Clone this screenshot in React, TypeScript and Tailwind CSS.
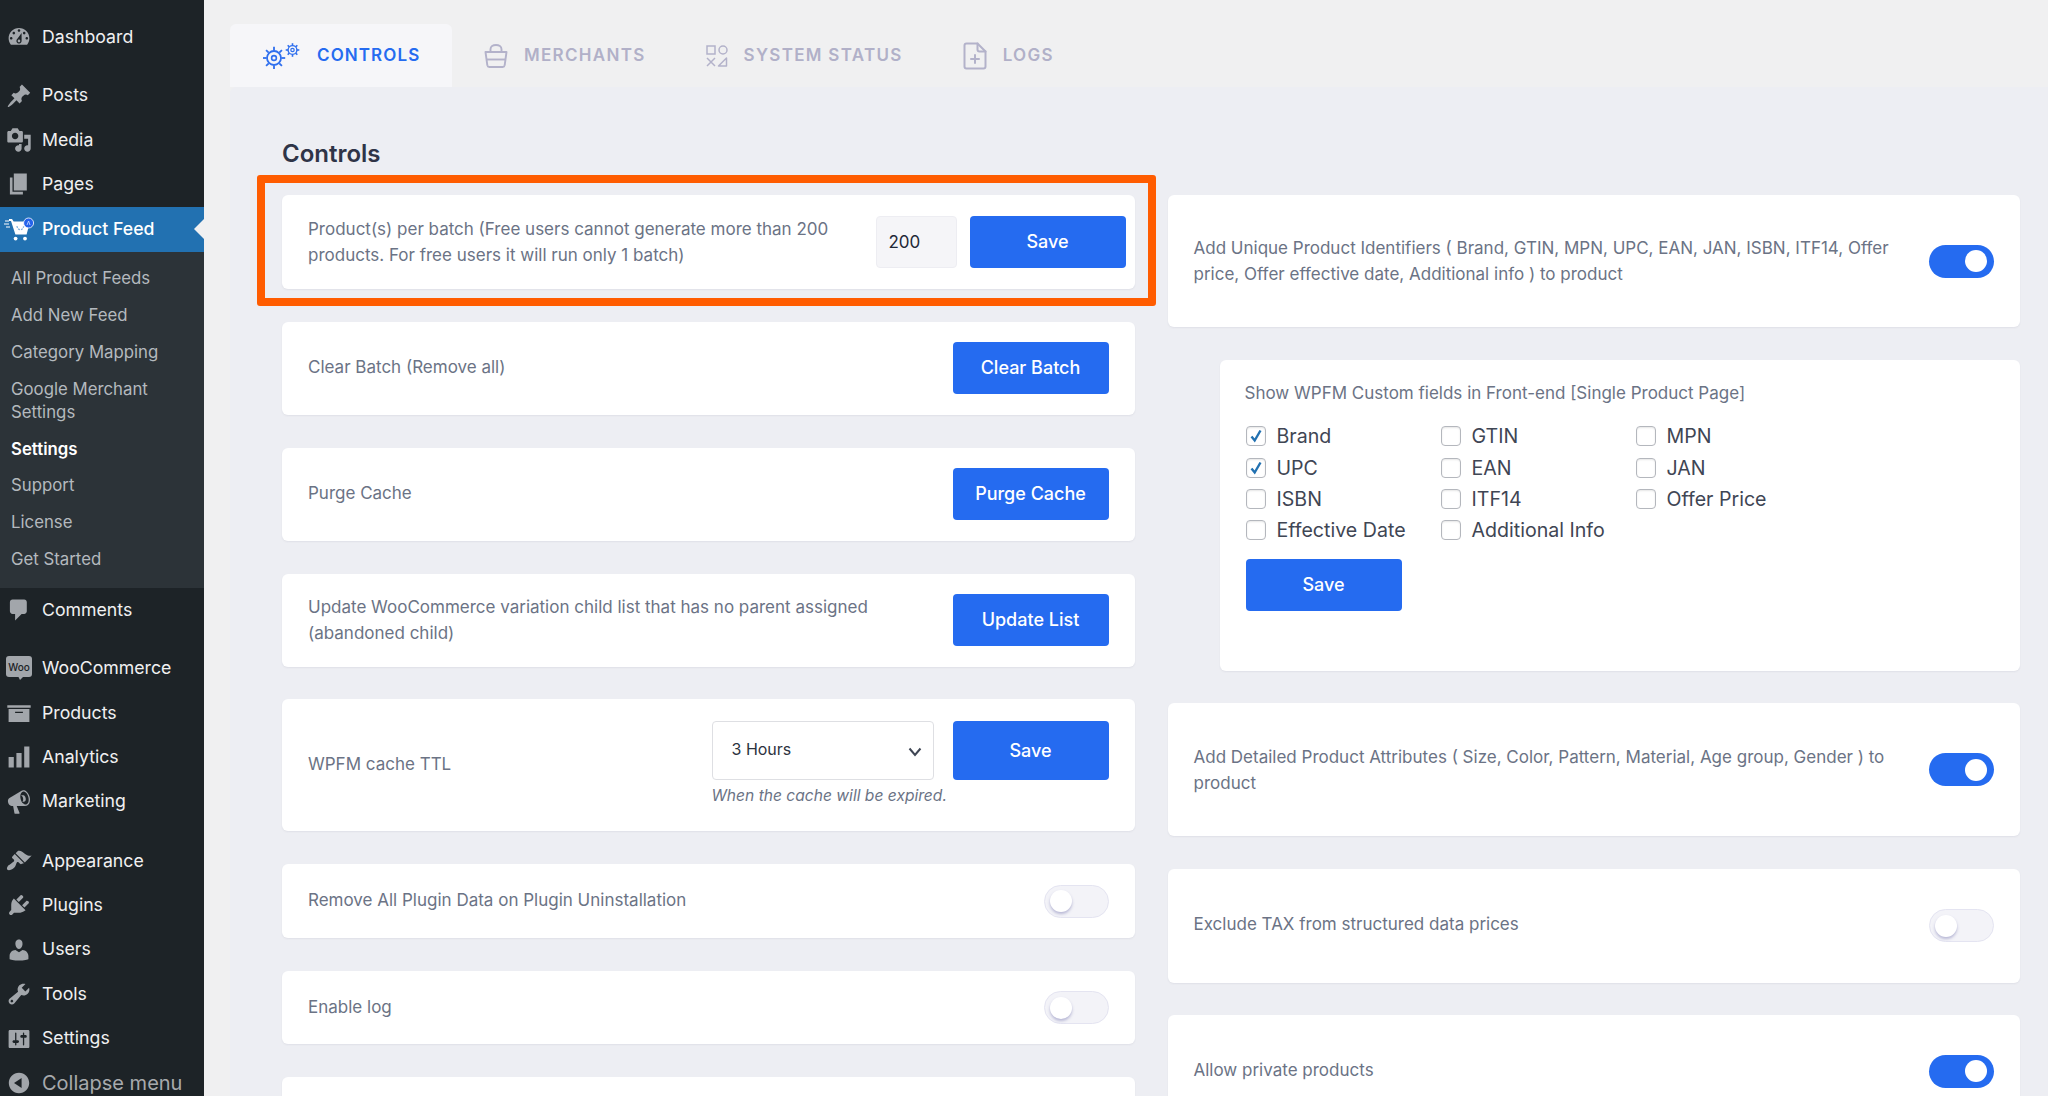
import React from "react";

const font = { fontFamily: '"Inter", "Liberation Sans", sans-serif' };

const P: Record<string, string> = {
  dashboard: "M3.76 16h12.48c1.1-1.37 1.76-3.11 1.76-5 0-4.42-3.58-8-8-8s-8 3.58-8 8c0 1.89.66 3.63 1.76 5zM10 4c.55 0 1 .45 1 1s-.45 1-1 1-1-.45-1-1 .45-1 1-1zM6 6c.55 0 1 .45 1 1s-.45 1-1 1-1-.45-1-1 .45-1 1-1zm8 0c.55 0 1 .45 1 1s-.45 1-1 1-1-.45-1-1 .45-1 1-1zm-5.37 5.55L12 7v6c0 1.1-.9 2-2 2s-2-.9-2-2c0-.57.24-1.08.63-1.45zM4 10c.55 0 1 .45 1 1s-.45 1-1 1-1-.45-1-1 .45-1 1-1zm12 0c.55 0 1 .45 1 1s-.45 1-1 1-1-.45-1-1 .45-1 1-1zm-5 3c0-.55-.45-1-1-1s-1 .45-1 1 .45 1 1 1 1-.45 1-1z",
  post: "M10.44 3.02l1.82-1.82 6.36 6.35-1.83 1.82c-1.05-.68-2.48-.57-3.41.36l-.75.75c-.92.93-1.04 2.35-.35 3.41l-1.83 1.82-2.41-2.41-2.8 2.79c-.42.42-3.38 2.71-3.8 2.29s1.86-3.39 2.28-3.81l2.79-2.79L4.1 9.36l1.83-1.82c1.05.69 2.48.57 3.4-.36l.75-.75c.93-.92 1.05-2.35.36-3.41z",
  media: "M13 11V4c0-.55-.45-1-1-1h-1.67L9 1H5L3.67 3H2c-.55 0-1 .45-1 1v7c0 .55.45 1 1 1h10c.55 0 1-.45 1-1zM7 4.5c1.38 0 2.5 1.12 2.5 2.5S8.38 9.5 7 9.5 4.5 8.38 4.5 7 5.62 4.5 7 4.5zM14 6h5v10.5c0 1.38-1.12 2.5-2.5 2.5S14 17.88 14 16.5s1.12-2.5 2.5-2.5c.17 0 .34.02.5.05V9h-3V6zm-4 8.05V13h2v3.5c0 1.38-1.12 2.5-2.5 2.5S7 17.88 7 16.5 8.12 14 9.5 14c.17 0 .34.02.5.05z",
  page: "M6 15V2h10v13H6zm-1 1h8v2H3V5h2v11z",
  comments: "M5 2h9c1.1 0 2 .9 2 2v7c0 1.1-.9 2-2 2h-2l-5 5v-5H5c-1.1 0-2-.9-2-2V4c0-1.1.9-2 2-2z",
  archive: "M19 4v2H1V4h18zM2 7h16v10H2V7zm11 3V9H7v1h6z",
  chart: "M18 18V2h-4v16h4zm-6 0V7H8v11h4zm-6 0v-8H2v8h4z",
  megaphone: "M18.15 5.94c.46 1.62.38 3.22-.02 4.48-.42 1.28-1.26 2.18-2.3 2.48-.16.06-.26.06-.4.06-.06.02-.12.02-.18.02-.06.02-.14.02-.22.02h-6.8l2.22 5.5c.02.14-.06.26-.14.34-.08.1-.24.16-.34.16H6.95c-.1 0-.26-.06-.34-.16-.08-.08-.16-.2-.14-.34l-1-5.5H4.25l-.02-.02c-.5.06-1.08-.18-1.54-.62s-.88-1.08-1.06-1.88c-.24-.8-.2-1.56-.02-2.2.18-.62.58-1.08 1.06-1.3l.02-.02 9-5.4c.1-.06.18-.1.24-.16.06-.04.14-.08.24-.12.16-.08.28-.12.5-.18 1.04-.3 2.24.1 3.22.98s1.84 2.24 2.26 3.86zm-2.58 5.98h-.02c.4-.1.74-.34 1.04-.7.58-.7.86-1.76.86-3.04 0-.64-.1-1.3-.28-1.98-.34-1.36-1.02-2.5-1.78-3.24s-1.68-1.1-2.46-.88c-.82.22-1.4.96-1.7 2-.32 1.04-.28 2.36.06 3.72.38 1.36 1 2.5 1.8 3.24.78.74 1.62 1.1 2.48.88zm-2.54-7.08c.22-.04.42-.02.62.04.2.08.38.18.56.34.18.18.34.4.46.64.14.26.26.54.36.86s.16.62.18.92c.02.32 0 .6-.06.86-.04.26-.16.48-.28.68-.14.2-.3.32-.52.38l-1.78.46c.6-.7.86-1.94.48-3.24-.38-1.3-1.26-2.08-2.02-1.94z",
  appearance: "M14.48 11.06L7.41 3.99l1.5-1.5c.5-.56 2.3-.47 3.51.32 1.21.8 1.43 1.28 2.91 2.1 1.18.64 2.45 1.26 4.45.85zm-.71.71L6.7 4.7 4.93 6.47c-.39.39-.39 1.02 0 1.41l1.06 1.06c.39.39.39 1.03 0 1.42-.6.6-1.43 1.11-2.21 1.69-.35.26-.7.53-1.01.84C1.43 13.23.1 15.8 1.12 16.8c.99 1 3.74-.3 5.08-1.64.44-.44.78-.9 1.03-1.4.64-1.27.77-2.35 1.11-2.7.39-.38 1.02-.39 1.41 0l1.07 1.07c.39.39 1.02.39 1.41 0z",
  plugin: "M13.11 4.36L9.87 7.6 8 5.73l3.24-3.24c.35-.34 1.05-.2 1.56.32.52.51.66 1.21.31 1.55zm-8 1.77l.91-1.12 9.01 9.01-1.19.84c-.71.71-2.63 1.16-3.82 1.16H6.14L4.9 17.26c-.59.59-1.54.59-2.12 0-.59-.58-.59-1.53 0-2.12l1.24-1.24v-3.88c0-1.13.4-3.19 1.09-3.89zm7.26 3.97l3.24-3.24c.34-.35 1.04-.21 1.55.31.52.51.66 1.21.31 1.55l-3.24 3.25z",
  users: "M10 9.25c-2.27 0-2.73-3.44-2.73-3.44C7 4.02 7.82 2 9.97 2c2.16 0 2.98 2.02 2.71 3.81 0 0-.41 3.44-2.68 3.44zm0 2.57L12.72 10c2.39 0 4.52 2.33 4.52 4.53v2.49s-3.65 1.13-7.24 1.13c-3.65 0-7.24-1.13-7.24-1.13v-2.49c0-2.25 1.94-4.48 4.47-4.48z",
  tools: "M16.68 9.77c-1.34 1.34-3.3 1.67-4.95.99l-5.41 6.52c-.99.99-2.59.99-3.58 0s-.99-2.59 0-3.57l6.52-5.42c-.68-1.65-.35-3.61.99-4.95 1.28-1.28 3.12-1.62 4.72-1.06l-2.89 2.89 2.82 2.82 2.86-2.87c.53 1.58.18 3.39-1.08 4.65zM3.81 16.21c.4.39 1.04.39 1.43 0 .4-.4.4-1.04 0-1.43-.39-.4-1.03-.4-1.43 0-.39.39-.39 1.03 0 1.43z",
  settings: "M18 16V4c0-.55-.45-1-1-1H3c-.55 0-1 .45-1 1v12c0 .55.45 1 1 1h14c.55 0 1-.45 1-1zM8 11h1c.55 0 1 .45 1 1s-.45 1-1 1H8v1.5c0 .28-.22.5-.5.5s-.5-.22-.5-.5V13H6c-.55 0-1-.45-1-1s.45-1 1-1h1V5.5c0-.28.22-.5.5-.5s.5.22.5.5V11zm5-2h-1c-.55 0-1-.45-1-1s.45-1 1-1h1V5.5c0-.28.22-.5.5-.5s.5.22.5.5V7h1c.55 0 1 .45 1 1s-.45 1-1 1h-1v5.5c0 .28-.22.5-.5.5s-.5-.22-.5-.5V9z",
  collapse: "M10 2.16c4.33 0 7.84 3.51 7.84 7.84s-3.51 7.84-7.84 7.84S2.16 14.33 2.16 10 5.71 2.16 10 2.16zm2 11.72V6.12L6.18 9.97z",
};

function WpIcon({ name }: { name: string }) {
  return (
    <svg viewBox="0 0 20 20" className="w-[26px] h-[26px] fill-[#a2a6ab]">
      <path d={P[name]} />
    </svg>
  );
}

function WooIcon() {
  return (
    <svg viewBox="0 0 26 26" className="w-[26px] h-[26px]">
      <rect x="0" y="1" width="26" height="21" rx="3" fill="#a2a6ab" />
      <path d="M12 21h6l-4 4z" fill="#a2a6ab" />
      <text x="13" y="15.5" textAnchor="middle" fontSize="10" fontWeight="500" fill="#1d2327" fontFamily="Inter, sans-serif">Woo</text>
    </svg>
  );
}

function CartIcon() {
  return (
    <svg viewBox="0 0 30 26" className="w-[30px] h-[26px]">
      <path d="M1 5h4M0 8h5M2 11h4" stroke="#fff" strokeWidth="1" />
      <path d="M5 3h3l1.6 2.5H26l-3.4 13H11.4L7 5H5z" fill="#fff" />
      <circle cx="11.6" cy="22.6" r="1.9" fill="#fff" />
      <circle cx="21" cy="22.6" r="1.9" fill="#fff" />
      <path d="M13 10c.3 4.8 6 4.8 6.6.4" fill="none" stroke="#7fb0dc" strokeWidth="1.2" strokeDasharray="2 1" />
      <circle cx="24.6" cy="7" r="5" fill="#2563eb" stroke="#fff" strokeWidth=".8" />
      <path d="M23 9l1.6-4 1.4 4" fill="none" stroke="#cfe0ff" strokeWidth=".8" />
    </svg>
  );
}

function GearIcon() {
  const big = Array.from({ length: 8 }, (_, i) => i * 45);
  return (
    <svg viewBox="0 0 38 26" className="w-[38px] h-[26px]" fill="none" stroke="#2f6fee">
      <g transform="translate(11 15)">
        {big.map((a) => (
          <path key={a} d="M0 -7.5V-11.2" strokeWidth="1.8" transform={`rotate(${a})`} />
        ))}
        <circle r="7" strokeWidth="1.8" />
        <circle r="2.4" strokeWidth="1.6" />
      </g>
      <g transform="translate(29.5 7)">
        {big.map((a) => (
          <path key={a} d="M0 -4.5V-6.8" strokeWidth="1.6" transform={`rotate(${a})`} />
        ))}
        <circle r="4.4" strokeWidth="1.4" />
        <circle r="1.7" strokeWidth="1.2" />
      </g>
    </svg>
  );
}

function BasketIcon() {
  return (
    <svg viewBox="0 0 24 26" className="w-[24px] h-[26px]" fill="none" stroke="#b3b2ca" strokeWidth="1.9" strokeLinejoin="round">
      <path d="M6.5 9V6.2C6.5 3.6 9 2 12 2s5.5 1.6 5.5 4.2V9" />
      <path d="M1.5 9h21l-1.8 13.2c-.2 1.2-1 1.8-2 1.8H5.3c-1 0-1.8-.6-2-1.8L1.5 9z" />
      <path d="M3 16.5h18" />
    </svg>
  );
}

function ShapesIcon() {
  return (
    <svg viewBox="0 0 22 22" className="w-[22px] h-[22px]" fill="none" stroke="#b3b2ca" strokeWidth="1.5">
      <rect x="1" y="1" width="8" height="8" />
      <circle cx="17" cy="5" r="4" />
      <path d="M1 13l8 8M9 13l-8 8" />
      <path d="M20.5 13v8h-8z" strokeLinejoin="round" />
    </svg>
  );
}

function DocIcon() {
  return (
    <svg viewBox="0 0 24 28" className="w-[24px] h-[28px]" fill="none" stroke="#b3b2ca" strokeWidth="2" strokeLinejoin="round" strokeLinecap="round">
      <path d="M3.5 1.5h11l8 8v15c0 1.2-.8 2-2 2h-17c-1.2 0-2-.8-2-2v-21c0-1.2.8-2 2-2z" />
      <path d="M14.5 1.5v6c0 1.2.8 2 2 2h6" />
      <path d="M12 13v8M8 17h8" />
    </svg>
  );
}

function MenuItem({ label, icon, custom }: { label: string; icon?: string; custom?: React.ReactNode }) {
  return (
    <div className="flex items-center h-[44.4px] text-[#f0f0f1] text-[17.7px]">
      <span className="w-[42px] pl-[6px] shrink-0 flex items-center">{custom ?? <WpIcon name={icon!} />}</span>
      <span>{label}</span>
    </div>
  );
}

function Sidebar() {
  const subs = ["All Product Feeds", "Add New Feed", "Category Mapping"];
  const subs2 = ["Support", "License", "Get Started"];
  const subClass = "px-[11px] py-[6.9px] leading-[23px] text-[16.8px] text-[#b4b9be]";
  return (
    <aside className="w-[204px] shrink-0 bg-[#1d2327] pt-[15px] overflow-hidden">
      <MenuItem label="Dashboard" icon="dashboard" />
      <div className="mt-[14px]">
        <MenuItem label="Posts" icon="post" />
        <MenuItem label="Media" icon="media" />
        <MenuItem label="Pages" icon="page" />
      </div>
      <div className="relative flex items-center h-[45px] bg-[#2271b1] text-white text-[17.7px] font-medium">
        <span className="w-[42px] pl-[4px] shrink-0 flex items-center"><CartIcon /></span>
        <span>Product Feed</span>
        <span className="absolute right-0 top-[12px] w-0 h-0 border-y-[10px] border-r-[10px] border-y-transparent border-r-[#f0f0f1]" />
      </div>
      <div className="bg-[#2c3338] pt-[9px] pb-[10px]">
        {subs.map((s) => (
          <div key={s} className={subClass}>{s}</div>
        ))}
        <div className={subClass}>Google Merchant<br />Settings</div>
        <div className={`${subClass} !text-white font-semibold`}>Settings</div>
        {subs2.map((s) => (
          <div key={s} className={subClass}>{s}</div>
        ))}
      </div>
      <MenuItem label="Comments" icon="comments" />
      <div className="mt-[14px]">
        <MenuItem label="WooCommerce" custom={<WooIcon />} />
        <MenuItem label="Products" icon="archive" />
        <MenuItem label="Analytics" icon="chart" />
        <MenuItem label="Marketing" icon="megaphone" />
      </div>
      <div className="mt-[15px]">
        <MenuItem label="Appearance" icon="appearance" />
        <MenuItem label="Plugins" icon="plugin" />
        <MenuItem label="Users" icon="users" />
        <MenuItem label="Tools" icon="tools" />
        <MenuItem label="Settings" icon="settings" />
      </div>
      <div className="flex items-center h-[44.4px] text-[#a7aaad] text-[20px]">
        <span className="w-[42px] pl-[6px] shrink-0 flex items-center"><WpIcon name="collapse" /></span>
        <span>Collapse menu</span>
      </div>
    </aside>
  );
}

function Btn({ children, w = "w-[156px]", h = "h-[52px]" }: { children: React.ReactNode; w?: string; h?: string }) {
  return (
    <button className={`${w} ${h} shrink-0 rounded-[4px] bg-[#256bf0] text-white text-[18px] font-medium flex items-center justify-center`}>
      {children}
    </button>
  );
}

function Toggle({ on }: { on?: boolean }) {
  return on ? (
    <span className="w-[65px] h-[33px] shrink-0 rounded-full bg-[#256bf0] flex items-center justify-end pr-[7px]">
      <span className="w-[22px] h-[22px] rounded-full bg-white" />
    </span>
  ) : (
    <span className="w-[65px] h-[33px] shrink-0 rounded-full bg-[#f3f3f8] border border-[#e4e4f1] flex items-center pl-[5px]">
      <span className="w-[22px] h-[22px] rounded-full bg-white shadow-[0_2px_3px_rgba(110,110,170,0.45)]" />
    </span>
  );
}

function Card({ className = "", children }: { className?: string; children: React.ReactNode }) {
  return (
    <div className={`bg-white rounded-[6px] shadow-[0_1px_2px_rgba(60,60,90,0.07)] flex items-center text-[17px] leading-[26px] text-[#6b7385] ${className}`}>
      {children}
    </div>
  );
}

function Check({ label, on }: { label: string; on?: boolean }) {
  return (
    <label className="flex items-center gap-[11px] h-[31.4px] text-[19.6px] text-[#3f4654]">
      <span className="relative w-[20px] h-[20px] rounded-[4px] border border-[#b4b7bd] bg-white shadow-[inset_0_1px_2px_rgba(0,0,0,0.1)] shrink-0">
        {on && (
          <svg viewBox="0 0 20 20" className="absolute -left-[1px] -top-[1px] w-[20px] h-[20px]" fill="none" stroke="#2271b1" strokeWidth="2.4">
            <path d="M5.5 10.5l3.2 4L14.5 4.5" />
          </svg>
        )}
      </span>
      <span>{label}</span>
    </label>
  );
}

function Tabs() {
  const t = "flex items-center h-full px-[32px] text-[17px] font-semibold tracking-[1.3px] text-[#b1b0c8]";
  return (
    <div className="flex h-[63px] shrink-0">
      <div className="flex items-center h-full w-[222px] pl-[33px] gap-[16px] bg-[#f6f6f9] rounded-t-[6px] text-[17px] font-semibold tracking-[1.1px] text-[#256bf0]">
        <GearIcon />
        <span>CONTROLS</span>
      </div>
      <div className={`${t} gap-[16px]`}><BasketIcon /><span>MERCHANTS</span></div>
      <div className={`${t} gap-[16px] !pl-[28px]`}><ShapesIcon /><span>SYSTEM STATUS</span></div>
      <div className={`${t} gap-[16px] !pl-[28px]`}><DocIcon /><span>LOGS</span></div>
    </div>
  );
}

export default function App() {
  return (
    <div style={font} className="flex w-[2048px] h-[1096px] overflow-hidden bg-[#f0f0f1]">
      <Sidebar />
      <main className="flex-1 min-w-0 flex flex-col pl-[26px] pt-[24px]">
        <Tabs />
        <section className="flex-1 bg-[#edeef3] rounded-tl-[6px] pl-[52px] pr-[28px] pt-[51px] overflow-hidden">
          <h2 className="h-[32px] leading-[32px] text-[24px] font-semibold text-[#2f3447] mb-[25px]">Controls</h2>
          <div className="grid grid-cols-2 gap-x-[33px] items-start">
            <div className="flex flex-col gap-[32.85px]">
              <div className="relative">
                <span className="absolute -left-[25px] -right-[21px] -top-[20px] -bottom-[17px] border-[8px] border-[#ff5c00] rounded-[3px]" />
                <Card className="h-[94px] pl-[26px] pr-[9px]">
                  <span className="flex-1 pr-[30px]">Product(s) per batch (Free users cannot generate more than 200 products. For free users it will run only 1 batch)</span>
                  <span className="w-[81px] h-[52px] shrink-0 rounded-[4px] bg-[#f5f5f8] border border-[#ededf2] text-[#1f2937] text-[17px] flex items-center pl-[12px] mr-[13px]">200</span>
                  <Btn>Save</Btn>
                </Card>
              </div>
              <Card className="h-[93px] px-[26px] justify-between"><span className="pb-[2px]">Clear Batch (Remove all)</span><Btn>Clear Batch</Btn></Card>
              <Card className="h-[93px] px-[26px] justify-between"><span className="pb-[2px]">Purge Cache</span><Btn>Purge Cache</Btn></Card>
              <Card className="h-[93px] px-[26px] justify-between">
                <span className="max-w-[600px]">Update WooCommerce variation child list that has no parent assigned (abandoned child)</span>
                <Btn>Update List</Btn>
              </Card>
              <Card className="h-[132px] px-[26px] justify-between">
                <span className="pb-[2px]">WPFM cache TTL</span>
                <div className="flex flex-col">
                  <div className="flex gap-[19px]">
                    <div className="w-[222px] h-[59px] rounded-[4px] border border-[#dedfe3] bg-white flex items-center justify-between pl-[19px] pr-[11px] text-[16px] text-[#2d3340]">
                      <span className="-mt-[3px]">3 Hours</span>
                      <svg viewBox="0 0 14 10" className="w-[14px] h-[10px] mt-[3px]" fill="none" stroke="#3f4654" strokeWidth="2"><path d="M1.5 1.5L7 8l5.5-6.5" /></svg>
                    </div>
                    <Btn h="h-[59px]">Save</Btn>
                  </div>
                  <i className="mt-[3px] text-[15.6px] text-[#6b7385]">When the cache will be expired.</i>
                </div>
              </Card>
              <Card className="h-[74px] px-[26px] justify-between"><span className="pb-[2px]">Remove All Plugin Data on Plugin Uninstallation</span><Toggle /></Card>
              <Card className="h-[73px] px-[26px] justify-between"><span className="pb-[2px]">Enable log</span><Toggle /></Card>
              <Card className="h-[73px] px-[26px]"><span /></Card>
            </div>
            <div className="flex flex-col gap-[32.5px]">
              <Card className="h-[132px] pl-[26px] pr-[26px] justify-between">
                <span className="max-w-[720px]">Add Unique Product Identifiers ( Brand, GTIN, MPN, UPC, EAN, JAN, ISBN, ITF14, Offer price, Offer effective date, Additional info ) to product</span>
                <Toggle on />
              </Card>
              <div className="ml-[52px] h-[311px] bg-white rounded-[6px] shadow-[0_1px_2px_rgba(60,60,90,0.07)] pl-[26px] pt-[20px] text-[17px] leading-[26px] text-[#6b7385]">
                <div className="-ml-[1px]">Show WPFM Custom fields in Front-end [Single Product Page]</div>
                <div className="grid grid-cols-[195px_195px_195px] mt-[15px]">
                  <Check label="Brand" on />
                  <Check label="GTIN" />
                  <Check label="MPN" />
                  <Check label="UPC" on />
                  <Check label="EAN" />
                  <Check label="JAN" />
                  <Check label="ISBN" />
                  <Check label="ITF14" />
                  <Check label="Offer Price" />
                  <Check label="Effective Date" />
                  <Check label="Additional Info" />
                </div>
                <div className="mt-[13px]"><Btn>Save</Btn></div>
              </div>
              <Card className="h-[133px] pl-[26px] pr-[26px] justify-between">
                <span className="max-w-[720px]">Add Detailed Product Attributes ( Size, Color, Pattern, Material, Age group, Gender ) to product</span>
                <Toggle on />
              </Card>
              <Card className="h-[114px] pl-[26px] pr-[26px] justify-between"><span className="pb-[3px]">Exclude TAX from structured data prices</span><Toggle /></Card>
              <Card className="h-[112px] pl-[26px] pr-[26px] justify-between"><span className="pb-[3px]">Allow private products</span><Toggle on /></Card>
            </div>
          </div>
        </section>
      </main>
    </div>
  );
}
